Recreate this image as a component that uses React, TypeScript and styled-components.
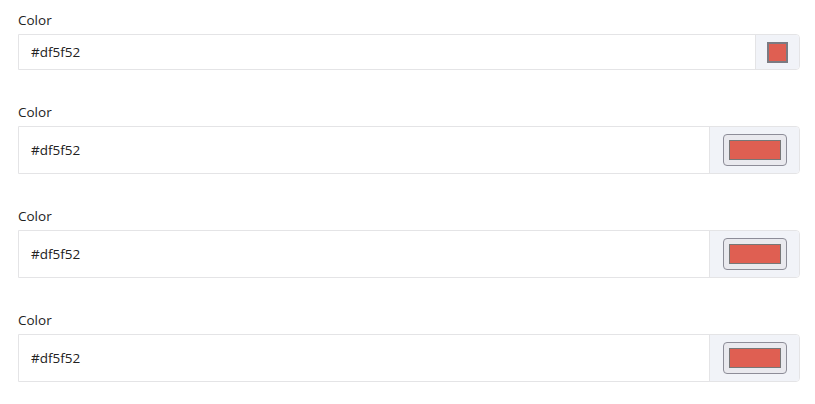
import React from 'react';
import styled, { createGlobalStyle } from 'styled-components';

const GlobalStyle = createGlobalStyle`
  html, body {
    margin: 0;
    padding: 0;
    background: #ffffff;
  }
  body {
    font-family: "Open Sans", "Noto Sans", sans-serif;
    color: #222222;
  }
`

const Page = styled.div`
  padding: 10px 15px 0 18px;
  display: flex;
  flex-direction: column;
  gap: 32px;
`

const Group = styled.div`
  display: flex;
  flex-direction: column;
  gap: 4px;
`

const Label = styled.label`
  font-size: 13.5px;
  line-height: 20px;
  color: #222222;
`

const Box = styled.div<{ $large?: boolean }>`
  display: flex;
  align-items: stretch;
  height: ${p => (p.$large ? '48px' : '36px')};
  box-sizing: border-box;
  border: 1px solid #e4e4e6;
  border-radius: 0 4px 4px 0;
  overflow: hidden;
`

const Value = styled.div`
  flex: 1;
  display: flex;
  align-items: center;
  padding-left: 12px;
  font-size: 13.5px;
  color: #222222;
  background: #ffffff;
`

const Addon = styled.div<{ $large?: boolean }>`
  width: ${p => (p.$large ? '89px' : '43px')};
  display: flex;
  align-items: center;
  justify-content: center;
  background: #f1f3f8;
  border-left: 1px solid #e4e4e6;
`

const Square = styled.div<{ $color: string }>`
  width: 21px;
  height: 21px;
  box-sizing: border-box;
  background: ${p => p.$color};
  border: 2px solid #7b7b82;
`

const SwatchButton = styled.div`
  width: 64px;
  height: 32px;
  box-sizing: border-box;
  padding: 5px 5px;
  border: 1px solid #8d8d98;
  border-radius: 4px;
  background: #e9e9ee;
`

const SwatchFill = styled.div<{ $color: string }>`
  width: 100%;
  height: 100%;
  box-sizing: border-box;
  background: ${p => p.$color};
  border: 1.5px solid #777777;
`

const color = '#df5f52'

function ColorField({ large }: { large?: boolean }) {
  return (
    <Group>
      <Label>Color</Label>
      <Box $large={large}>
        <Value>{color}</Value>
        <Addon $large={large}>
          {large ? (
            <SwatchButton>
              <SwatchFill $color={color} />
            </SwatchButton>
          ) : (
            <Square $color={color} />
          )}
        </Addon>
      </Box>
    </Group>
  )
}

function App() {
  return (
    <>
      <GlobalStyle />
      <Page>
        <ColorField />
        <ColorField large />
        <ColorField large />
        <ColorField large />
      </Page>
    </>
  )
}

export default App
